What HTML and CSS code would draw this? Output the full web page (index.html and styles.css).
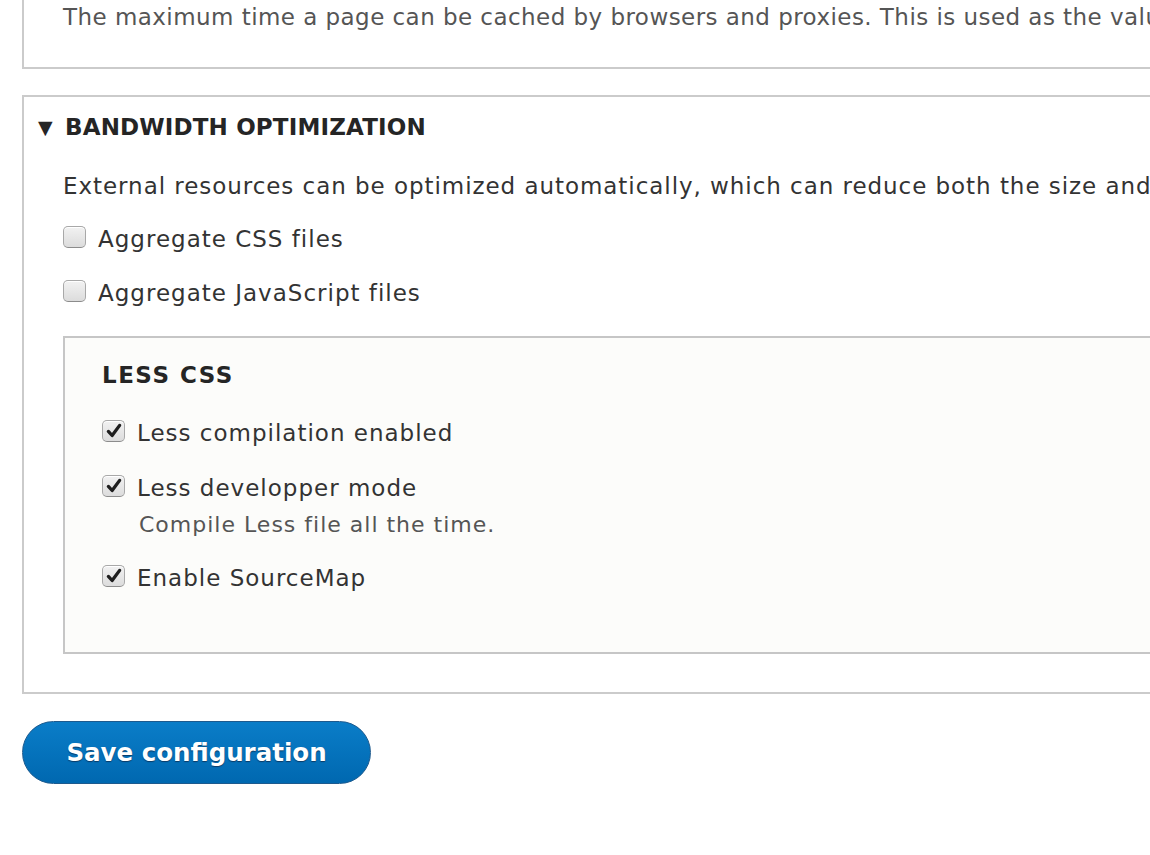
FILE: index.html
```html
<!DOCTYPE html>
<html>
<head>
<meta charset="utf-8">
<link rel="stylesheet" href="styles.css">
</head>
<body>
<div class="page">
  <div class="fieldset fs-top">
    <div class="description">The maximum time a page can be cached by browsers and proxies. This is used as the value for max-age in Cache-Control headers.</div>
  </div>

  <div class="fieldset fs-bandwidth">
    <div class="summary"><span class="arrow">▼</span>BANDWIDTH OPTIMIZATION</div>
    <div class="fs-body">
      <div class="intro">External resources can be optimized automatically, which can reduce both the size and number of requests made to your website.</div>
      <label class="row row-first"><span class="cb"></span><span class="lbl">Aggregate CSS files</span></label>
      <label class="row"><span class="cb"></span><span class="lbl">Aggregate JavaScript files</span></label>

      <div class="inner">
        <div class="legend">LESS CSS</div>
        <label class="row row-first"><span class="cb checked"><svg viewBox="0 0 24 24" width="18" height="18"><path d="M4.5 12.5 L9.5 18 L19.5 4.5" fill="none" stroke="#1e1e1e" stroke-width="4.4" stroke-linecap="round" stroke-linejoin="round"/></svg></span><span class="lbl">Less compilation enabled</span></label>
        <label class="row"><span class="cb checked"><svg viewBox="0 0 24 24" width="18" height="18"><path d="M4.5 12.5 L9.5 18 L19.5 4.5" fill="none" stroke="#1e1e1e" stroke-width="4.4" stroke-linecap="round" stroke-linejoin="round"/></svg></span><span class="lbl">Less developper mode</span></label>
        <div class="item-desc">Compile Less file all the time.</div>
        <label class="row"><span class="cb checked"><svg viewBox="0 0 24 24" width="18" height="18"><path d="M4.5 12.5 L9.5 18 L19.5 4.5" fill="none" stroke="#1e1e1e" stroke-width="4.4" stroke-linecap="round" stroke-linejoin="round"/></svg></span><span class="lbl">Enable SourceMap</span></label>
      </div>
    </div>
  </div>

  <div class="actions">
    <button class="button-primary">Save configuration</button>
  </div>
</div>
</body>
</html>
```

FILE: styles.css
```css
html, body {
  margin: 0;
  padding: 0;
  overflow: hidden;
  background: #fff;
}
body {
  font-family: "DejaVu Sans", "Lucida Grande", sans-serif;
  font-size: 23px;
  color: #333;
}
.page {
  padding-left: 22px;
  width: 1600px;
}
.fieldset {
  border: 2px solid #cbcbcb;
  box-sizing: border-box;
  white-space: nowrap;
}
.fs-top {
  border-top: none;
  padding: 0 0 33px 39px;
}
.description {
  line-height: 34px;
  color: #555;
  letter-spacing: 0.45px;
}
.fs-bandwidth {
  margin-top: 26px;
  padding-bottom: 38px;
}
.summary {
  height: 58px;
  line-height: 58px;
  padding-top: 1px;
  padding-left: 14px;
  font-weight: bold;
  color: #252525;
  letter-spacing: 0.15px;
}
.arrow {
  display: inline-block;
  width: 27px;
  font-size: 19px;
  vertical-align: top;
}
.fs-body {
  padding-left: 39px;
}
.intro {
  margin-top: 13px;
  line-height: 34px;
  letter-spacing: 0.95px;
}
.row {
  display: flex;
  align-items: center;
  height: 34px;
  margin-top: 20px;
}
.row-first {
  margin-top: 19px;
}
.lbl {
  letter-spacing: 1px;
}
.cb {
  width: 23px;
  height: 22px;
  box-sizing: border-box;
  border: 1px solid #a8a8a8;
  border-bottom-color: #8c8c8c;
  border-radius: 5px;
  background: linear-gradient(#f2f2f2, #dcdcdc);
  box-shadow: inset 0 1px 0 #fff;
  margin-right: 12px;
  flex: none;
  display: flex;
  align-items: center;
  justify-content: center;
  position: relative;
  top: -2px;
}
.cb svg {
  display: block;
}
.inner {
  margin-top: 26px;
  border: 2px solid #c6c6c6;
  background: #fcfcfa;
  padding: 20px 0 57px 37px;
}
.legend {
  line-height: 34px;
  font-weight: bold;
  color: #252525;
  letter-spacing: 1.5px;
}
.inner .row {
  margin-top: 21px;
}
.inner .row-first {
  margin-top: 24px;
}
.item-desc {
  font-size: 22px;
  line-height: 30px;
  margin-top: 5px;
  padding-left: 37px;
  color: #555;
  letter-spacing: 1px;
}
.actions {
  margin-top: 27px;
}
.button-primary {
  width: 349px;
  height: 63px;
  border: 1px solid #1d5a8e;
  border-radius: 32px;
  background: linear-gradient(#0a7dc8, #0068b0);
  color: #fff;
  font-family: "DejaVu Sans", sans-serif;
  font-weight: bold;
  font-size: 24.5px;
  text-shadow: 0 1px 1px #0b3b66;
  padding: 0;
  text-align: center;
  letter-spacing: 0;
}
```
